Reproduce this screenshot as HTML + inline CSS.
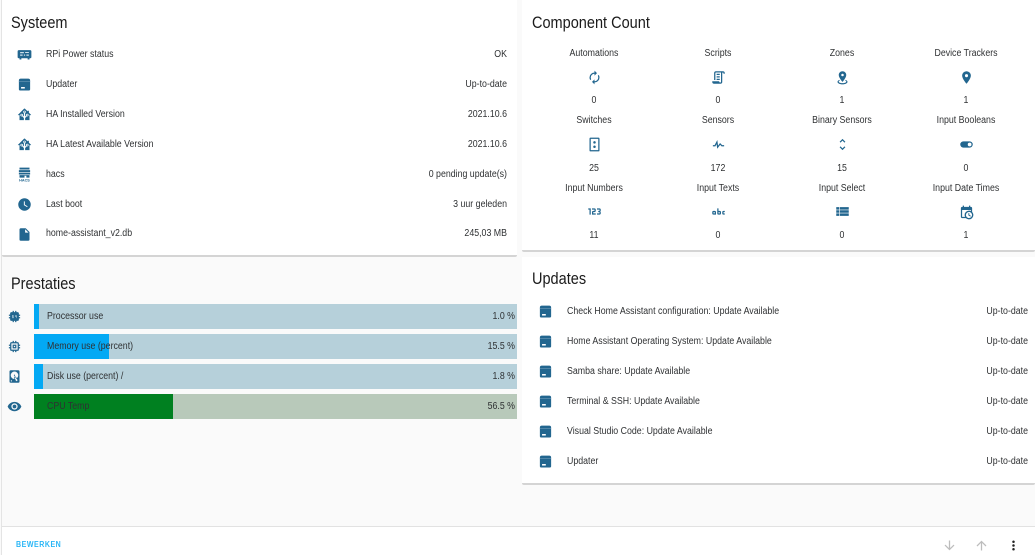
<!DOCTYPE html>
<html lang="nl"><head><meta charset="utf-8"><title>Systeem</title>
<style>
html,body{margin:0;padding:0}
body{position:relative;width:1035px;height:555px;overflow:hidden;background:#fafafa;font-family:"Liberation Sans",sans-serif;color:#2f3133;font-size:10px}
.a{position:absolute;white-space:nowrap}
.card{position:absolute;background:#fff;border-bottom:2px solid #d4d4d4;box-sizing:border-box;border-radius:0 0 2px 2px}
.t{position:absolute;white-space:nowrap;height:14px;line-height:14px;margin-top:1px;transform:scaleX(.88);transform-origin:0 50%}
.r{text-align:right;transform:translateX(-100%) scaleX(.88);transform-origin:100% 50%}
.c{transform:translateX(-50%) scaleX(.88);transform-origin:50% 50%}
.h{position:absolute;white-space:nowrap;font-size:16.5px;line-height:20px;margin-top:1px;color:#1a1a1a;transform:scaleX(.88);transform-origin:0 50%}
svg.i{position:absolute;width:15px;height:15px;margin:1.5px;fill:#22668f}
.bar{position:absolute;left:34px;width:483px;height:25px;background:#b6d0da}
.bar i{position:absolute;left:0;top:0;bottom:0;background:#03a9f4}
</style></head><body>
<svg width="0" height="0" style="position:absolute"><defs>
<symbol id="box" viewBox="0 0 24 24"><path d="M6 2.500h12a3 3 0 0 1 3 3v14a2 2 0 0 1-2 2H5a2 2 0 0 1-2-2v-14a3 3 0 0 1 3-3z"/><path d="M3 6.500h18v1H3z" fill="#6d9ab8"/><path d="M6.500 16h6v2.500h-6z" fill="#fff"/></symbol>
<symbol id="ha" viewBox="0 0 24 24"><path d="M21.8,13H20V21H13V17.67L15.79,14.88L16.5,15C17.66,15 18.6,14.06 18.6,12.9C18.6,11.74 17.66,10.8 16.5,10.8A2.1,2.1 0 0,0 14.4,12.9L14.5,13.61L13,15.13V9.65C13.66,9.29 14.1,8.6 14.1,7.8A2.1,2.1 0 0,0 12,5.7A2.1,2.1 0 0,0 9.9,7.8C9.9,8.6 10.34,9.29 11,9.65V15.13L9.5,13.61L9.6,12.9A2.1,2.1 0 0,0 7.5,10.8A2.1,2.1 0 0,0 5.4,12.9A2.1,2.1 0 0,0 7.5,15L8.21,14.88L11,17.67V21H4V13H2.25C1.83,13 1.42,13 1.42,12.79C1.43,12.57 1.85,12.15 2.28,11.72L11,3C11.33,2.67 11.67,2.33 12,2.33C12.33,2.33 12.67,2.67 13,3L17,7V6H19V9L21.78,11.78C22.18,12.18 22.59,12.59 22.6,12.8C22.6,13 22.2,13 21.8,13M7.5,12A0.9,0.9 0 0,1 8.4,12.9A0.9,0.9 0 0,1 7.5,13.8A0.9,0.9 0 0,1 6.6,12.9A0.9,0.9 0 0,1 7.5,12M16.5,12C17,12 17.4,12.4 17.4,12.9C17.4,13.4 17,13.8 16.5,13.8A0.9,0.9 0 0,1 15.6,12.9A0.9,0.9 0 0,1 16.5,12M12,6.9C12.5,6.9 12.9,7.3 12.9,7.8C12.9,8.3 12.5,8.7 12,8.7C11.5,8.7 11.1,8.3 11.1,7.8C11.1,7.3 11.5,6.9 12,6.9Z"/></symbol>
<symbol id="mem" viewBox="0 0 24 24"><path d="M17,17H7V7H17M21,11V9H19V7C19,5.89 18.1,5 17,5H15V3H13V5H11V3H9V5H7C5.89,5 5,5.89 5,7V9H3V11H5V13H3V15H5V17A2,2 0 0,0 7,19H9V21H11V19H13V21H15V19H17A2,2 0 0,0 19,17V15H21V13H19V11M13,13H11V11H13M15,9H9V15H15V9Z"/></symbol>
</defs></svg>

<div class="card" style="left:2px;top:0;width:515px;height:257px"></div>
<div class="card" style="left:522px;top:0;width:513px;height:252px"></div>
<div class="card" style="left:522px;top:257px;width:513px;height:228px"></div>

<div class="h" style="left:11px;top:12px">Systeem</div>
<div class="h" style="left:532px;top:12px">Component Count</div>
<div class="h" style="left:11px;top:273px">Prestaties</div>
<div class="h" style="left:532px;top:268px">Updates</div>

<!-- Systeem rows -->
<svg class="i" style="left:15px;top:45px" viewBox="0 0 24 24"><path d="M3 5h18a2 2 0 0 1 2 2v9a2 2 0 0 1-2 2h-1v2h-3v-2H7v2H4v-2H3a2 2 0 0 1-2-2V7a2 2 0 0 1 2-2z"/><path d="M5 8h6v2H5zM13 8h6v1.500h-6zM5 12h4v2H5zM11 12h2v2h-2zM15 12h4v2h-4z" fill="#cfe0ea"/></svg>
<div class="t" style="left:46px;top:47px">RPi Power status</div><div class="t r" style="left:507px;top:47px">OK</div>
<svg class="i" style="left:15px;top:75.500px"><use href="#box"/></svg>
<div class="t" style="left:46px;top:77px">Updater</div><div class="t r" style="left:507px;top:77px">Up-to-date</div>
<svg class="i" style="left:15px;top:105px"><use href="#ha"/></svg>
<div class="t" style="left:46px;top:107px">HA Installed Version</div><div class="t r" style="left:507px;top:107px">2021.10.6</div>
<svg class="i" style="left:15px;top:135px"><use href="#ha"/></svg>
<div class="t" style="left:46px;top:137px">HA Latest Available Version</div><div class="t r" style="left:507px;top:137px">2021.10.6</div>
<svg class="i" style="left:15px;top:165px" viewBox="0 0 24 24"><path d="M4 1h16v3H4zM3 5h18v3H3zM3 9h18v3H3zM4 13h16v4H15v-3h-3v3H4zM6 14h4v2H6z"/><text x="12" y="23.500" font-size="6" font-weight="700" text-anchor="middle" font-family="Liberation Sans,sans-serif">HACS</text></svg>
<div class="t" style="left:46px;top:167px">hacs</div><div class="t r" style="left:507px;top:167px">0 pending update(s)</div>
<svg class="i" style="left:15px;top:195px" viewBox="0 0 24 24"><path d="M12,2A10,10 0 0,0 2,12A10,10 0 0,0 12,22A10,10 0 0,0 22,12A10,10 0 0,0 12,2M16.2,16.2L11,13V7H12.500V12.200L17,14.900L16.200,16.200Z"/></svg>
<div class="t" style="left:46px;top:197px">Last boot</div><div class="t r" style="left:507px;top:197px">3 uur geleden</div>
<svg class="i" style="left:15px;top:225px" viewBox="0 0 24 24"><path d="M13,9V3.500L18.500,9M6,2C4.890,2 4,2.890 4,4V20A2,2 0 0,0 6,22H18A2,2 0 0,0 20,20V8L14,2H6Z"/></svg>
<div class="t" style="left:46px;top:226px">home-assistant_v2.db</div><div class="t r" style="left:507px;top:226px">245,03 MB</div>

<!-- Component count -->
<div class="t c" style="left:594px;top:46px">Automations</div><div class="t c" style="left:718px;top:46px">Scripts</div><div class="t c" style="left:842px;top:46px">Zones</div><div class="t c" style="left:966px;top:46px">Device Trackers</div>
<svg class="i" style="left:585px;top:68px" viewBox="0 0 24 24"><path d="M12,6V9L16,5L12,1V4A8,8 0 0,0 4,12C4,13.570 4.460,15.030 5.240,16.260L6.700,14.800C6.250,13.970 6,13 6,12A6,6 0 0,1 12,6M18.760,7.740L17.300,9.200C17.740,10.040 18,11 18,12A6,6 0 0,1 12,18V15L8,19L12,23V20A8,8 0 0,0 20,12C20,10.430 19.540,8.970 18.760,7.740Z"/></svg>
<svg class="i" style="left:709px;top:68px" viewBox="0 0 24 24"><path d="M15,20A1,1 0 0,0 16,19V4H8A1,1 0 0,0 7,5V16H5V5A3,3 0 0,1 8,2H19A3,3 0 0,1 22,5V6H20V5A1,1 0 0,0 19,4A1,1 0 0,0 18,5V9L18,19A3,3 0 0,1 15,22H5A3,3 0 0,1 2,19V18H13A2,2 0 0,0 15,20M9,6H14V8H9V6M9,10H14V12H9V10M9,14H14V16H9V14Z"/></svg>
<svg class="i" style="left:833px;top:68px" viewBox="0 0 24 24"><path d="M12,2C15.310,2 18,4.660 18,7.950C18,12.410 12,19 12,19C12,19 6,12.410 6,7.950C6,4.660 8.690,2 12,2M12,6A2,2 0 0,0 10,8A2,2 0 0,0 12,10A2,2 0 0,0 14,8A2,2 0 0,0 12,6M20,19C20,21.210 16.420,23 12,23C7.580,23 4,21.210 4,19C4,17.710 5.220,16.560 7.110,15.830L7.750,16.740C6.670,17.190 6,17.810 6,18.500C6,19.880 8.690,21 12,21C15.310,21 18,19.880 18,18.500C18,17.810 17.330,17.190 16.250,16.740L16.890,15.830C18.780,16.560 20,17.710 20,19Z"/></svg>
<svg class="i" style="left:957px;top:68px" viewBox="0 0 24 24"><path d="M12,11.500A2.500,2.500 0 0,1 9.500,9A2.500,2.500 0 0,1 12,6.500A2.500,2.500 0 0,1 14.500,9A2.500,2.500 0 0,1 12,11.500M12,2A7,7 0 0,0 5,9C5,14.250 12,22 12,22C12,22 19,14.250 19,9A7,7 0 0,0 12,2Z"/></svg>
<div class="t c" style="left:594px;top:93px">0</div><div class="t c" style="left:718px;top:93px">0</div><div class="t c" style="left:842px;top:93px">1</div><div class="t c" style="left:966px;top:93px">1</div>

<div class="t c" style="left:594px;top:113px">Switches</div><div class="t c" style="left:718px;top:113px">Sensors</div><div class="t c" style="left:842px;top:113px">Binary Sensors</div><div class="t c" style="left:966px;top:113px">Input Booleans</div>
<svg class="i" style="left:585px;top:135px" viewBox="0 0 24 24"><path fill-rule="evenodd" d="M5.500 1h13a1.500 1.500 0 0 1 1.500 1.500v19a1.500 1.500 0 0 1-1.500 1.500h-13A1.500 1.500 0 0 1 4 21.500v-19A1.500 1.500 0 0 1 5.500 1zM6 3v18h12V3zM12 6.500a2 2 0 1 0 0 4 2 2 0 0 0 0-4zM12 13.500a2 2 0 1 0 0 4 2 2 0 0 0 0-4z"/></svg>
<svg class="i" style="left:709px;top:135px" viewBox="0 0 24 24"><path d="M3,13H5.790L10.100,4.790L11.280,13.750L14.500,9.660L17.830,13H21V15H17L14.670,12.670L9.920,18.730L8.940,11.310L7,15H3V13Z"/></svg>
<svg class="i" style="left:833px;top:135px" viewBox="0 0 24 24"><path d="M12,18.170L8.830,15L7.410,16.410L12,21L16.590,16.410L15.170,15M12,5.830L15.170,9L16.580,7.590L12,3L7.410,7.590L8.830,9L12,5.830Z"/></svg>
<svg class="i" style="left:957px;top:135px" viewBox="0 0 24 24"><path d="M17,7H7A5,5 0 0,0 2,12A5,5 0 0,0 7,17H17A5,5 0 0,0 22,12A5,5 0 0,0 17,7M17,15A3,3 0 0,1 14,12A3,3 0 0,1 17,9A3,3 0 0,1 20,12A3,3 0 0,1 17,15Z"/></svg>
<div class="t c" style="left:594px;top:161px">25</div><div class="t c" style="left:718px;top:161px">172</div><div class="t c" style="left:842px;top:161px">15</div><div class="t c" style="left:966px;top:161px">0</div>

<div class="t c" style="left:594px;top:181px">Input Numbers</div><div class="t c" style="left:718px;top:181px">Input Texts</div><div class="t c" style="left:842px;top:181px">Input Select</div><div class="t c" style="left:966px;top:181px">Input Date Times</div>
<svg class="i" style="left:585px;top:202.500px" viewBox="0 0 24 24"><path d="M4,17V9H2V7H6V17H4M22,15C22,16.110 21.100,17 20,17H16V15H20V13H18V11H20V9H16V7H20A2,2 0 0,1 22,9V10.500A1.500,1.500 0 0,1 20.500,12A1.500,1.500 0 0,1 22,13.500V15M14,15V17H8V13C8,11.890 8.900,11 10,11H12V9H8V7H12A2,2 0 0,1 14,9V11C14,12.110 13.100,13 12,13H10V15H14Z"/></svg>
<svg class="i" style="left:709px;top:202.500px" viewBox="0 0 24 24"><path d="M6,11A2,2 0 0,1 8,13V17H4A2,2 0 0,1 2,15V13A2,2 0 0,1 4,11H6M4,13V15H6V13H4M20,13V15H22V17H20A2,2 0 0,1 18,15V13A2,2 0 0,1 20,11H22V13H20M12,7V11H14A2,2 0 0,1 16,13V15A2,2 0 0,1 14,17H12A2,2 0 0,1 10,15V7H12M12,15H14V13H12V15Z"/></svg>
<svg class="i" style="left:833px;top:202.500px" viewBox="0 0 24 24"><path d="M2,5V9H7V5M2,19H7V15H2M2,14H7V10H2M8,5V9H22V5M8,19H22V15H8M8,14H22V10H8Z"/></svg>
<svg class="i" style="left:957px;top:203px" viewBox="0 0 24 24"><path d="M15,13H16.500V15.820L18.940,17.230L18.190,18.530L15,16.690V13M19,8H5V19H9.670C9.240,18.090 9,17.070 9,16A7,7 0 0,1 16,9C17.070,9 18.090,9.240 19,9.670V8M5,21C3.890,21 3,20.100 3,19V5C3,3.890 3.890,3 5,3H6V1H8V3H16V1H18V3H19A2,2 0 0,1 21,5V11.100C22.240,12.360 23,14.090 23,16A7,7 0 0,1 16,23C14.090,23 12.360,22.240 11.100,21H5M16,11.150A4.850,4.850 0 0,0 11.150,16C11.150,18.680 13.320,20.850 16,20.850A4.850,4.850 0 0,0 20.850,16C20.850,13.320 18.680,11.150 16,11.150Z"/></svg>
<div class="t c" style="left:594px;top:228px">11</div><div class="t c" style="left:718px;top:228px">0</div><div class="t c" style="left:842px;top:228px">0</div><div class="t c" style="left:966px;top:228px">1</div>

<!-- Prestaties -->
<svg class="i" style="left:5px;top:307px" viewBox="0 0 24 24"><path d="M21,11V9H19V7C19,5.890 18.100,5 17,5H15V3H13V5H11V3H9V5H7C5.890,5 5,5.890 5,7V9H3V11H5V13H3V15H5V17A2,2 0 0,0 7,19H9V21H11V19H13V21H15V19H17A2,2 0 0,0 19,17V15H21V13H19V11Z"/><path d="M8 9.500h3v1H9v1h2v3H8zM9 12.500v1h1v-1zM13 9.500h1v2h1v-2h1v5h-1v-2h-2z" fill="#9dbed2"/></svg>
<svg class="i" style="left:5px;top:337px"><use href="#mem"/></svg>
<svg class="i" style="left:5px;top:367px" viewBox="0 0 24 24"><path d="M6,2H18A2,2 0 0,1 20,4V20A2,2 0 0,1 18,22H6A2,2 0 0,1 4,20V4A2,2 0 0,1 6,2M12,4A6,6 0 0,0 6,10C6,13.310 8.690,16 12.100,16L11.220,13.770C10.950,13.290 11.110,12.680 11.590,12.400L12.450,11.900C12.930,11.630 13.540,11.790 13.820,12.270L15.740,14.690C17.120,13.590 18,11.900 18,10A6,6 0 0,0 12,4M12,9A1,1 0 0,1 13,10A1,1 0 0,1 12,11A1,1 0 0,1 11,10A1,1 0 0,1 12,9M7,18A1,1 0 0,0 6,19A1,1 0 0,0 7,20A1,1 0 0,0 8,19A1,1 0 0,0 7,18M12.090,13.270L14.580,19.580L17.170,18.080L12.950,12.770L12.090,13.270Z"/></svg>
<svg class="i" style="left:5px;top:397px" viewBox="0 0 24 24"><path d="M12,9A3,3 0 0,0 9,12A3,3 0 0,0 12,15A3,3 0 0,0 15,12A3,3 0 0,0 12,9M12,17A5,5 0 0,1 7,12A5,5 0 0,1 12,7A5,5 0 0,1 17,12A5,5 0 0,1 12,17M12,4.500C7,4.500 2.730,7.610 1,12C2.730,16.390 7,19.500 12,19.500C17,19.500 21.270,16.390 23,12C21.270,7.610 17,4.500 12,4.500Z"/></svg>

<div class="bar" style="top:304px"><i style="width:5px"></i></div>
<div class="bar" style="top:334px"><i style="width:75px"></i></div>
<div class="bar" style="top:364px"><i style="width:9px"></i></div>
<div class="bar" style="top:394px;background:#b8c9ba"><i style="width:139px;background:#008020"></i></div>
<div class="t" style="left:47px;top:309px">Processor use</div><div class="t r" style="left:515px;top:309px">1.0 %</div>
<div class="t" style="left:47px;top:339px">Memory use (percent)</div><div class="t r" style="left:515px;top:339px">15.5 %</div>
<div class="t" style="left:47px;top:369px">Disk use (percent) /</div><div class="t r" style="left:515px;top:369px">1.8 %</div>
<div class="t" style="left:47px;top:399px">CPU Temp</div><div class="t r" style="left:515px;top:399px">56.5 %</div>

<!-- Updates -->
<svg class="i" style="left:536px;top:302.500px"><use href="#box"/></svg>
<div class="t" style="left:567px;top:304px">Check Home Assistant configuration: Update Available</div><div class="t r" style="left:1028px;top:304px">Up-to-date</div>
<svg class="i" style="left:536px;top:332.500px"><use href="#box"/></svg>
<div class="t" style="left:567px;top:334px">Home Assistant Operating System: Update Available</div><div class="t r" style="left:1028px;top:334px">Up-to-date</div>
<svg class="i" style="left:536px;top:362.500px"><use href="#box"/></svg>
<div class="t" style="left:567px;top:364px">Samba share: Update Available</div><div class="t r" style="left:1028px;top:364px">Up-to-date</div>
<svg class="i" style="left:536px;top:392.500px"><use href="#box"/></svg>
<div class="t" style="left:567px;top:394px">Terminal &amp; SSH: Update Available</div><div class="t r" style="left:1028px;top:394px">Up-to-date</div>
<svg class="i" style="left:536px;top:422.500px"><use href="#box"/></svg>
<div class="t" style="left:567px;top:424px">Visual Studio Code: Update Available</div><div class="t r" style="left:1028px;top:424px">Up-to-date</div>
<svg class="i" style="left:536px;top:452.500px"><use href="#box"/></svg>
<div class="t" style="left:567px;top:454px">Updater</div><div class="t r" style="left:1028px;top:454px">Up-to-date</div>

<!-- Footer -->
<div class="a" style="left:2px;top:526px;width:1033px;height:29px;background:#fff;border-top:1px solid #e2e2e2;box-sizing:border-box"></div>
<div class="a" style="left:1px;top:0;width:1px;height:555px;background:#e4e4e4"></div>
<div class="t" style="left:16px;top:537px;font-size:8px;font-weight:700;letter-spacing:.6px;color:#29b6f6">BEWERKEN</div>
<svg class="i" style="left:940px;top:536px;fill:#bdbdbd" viewBox="0 0 24 24"><path d="M11,4H13V16L18.500,10.500L19.920,11.920L12,19.840L4.080,11.920L5.500,10.500L11,16V4Z"/></svg>
<svg class="i" style="left:972px;top:536px;fill:#bdbdbd" viewBox="0 0 24 24"><path d="M13,20H11V8L5.500,13.500L4.080,12.080L12,4.160L19.920,12.080L18.500,13.500L13,8V20Z"/></svg>
<svg class="i" style="left:1004px;top:536px;fill:#222" viewBox="0 0 24 24"><path d="M12,16A2,2 0 0,1 14,18A2,2 0 0,1 12,20A2,2 0 0,1 10,18A2,2 0 0,1 12,16M12,10A2,2 0 0,1 14,12A2,2 0 0,1 12,14A2,2 0 0,1 10,12A2,2 0 0,1 12,10M12,4A2,2 0 0,1 14,6A2,2 0 0,1 12,8A2,2 0 0,1 10,6A2,2 0 0,1 12,4Z"/></svg>
</body></html>
